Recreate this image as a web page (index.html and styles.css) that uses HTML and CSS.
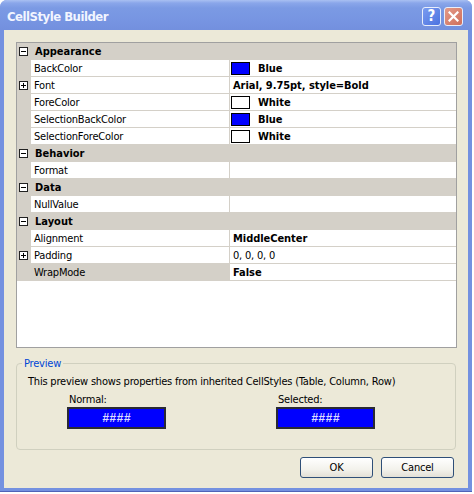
FILE: index.html
```html
<!DOCTYPE html>
<html>
<head>
<meta charset="utf-8">
<link rel="stylesheet" href="styles.css">
</head>
<body>
<div class="window">
  <div class="titlebar">
    <span class="title">CellStyle Builder</span>
    <div class="tbtns">
      <span class="tbtn help">?</span>
      <span class="tbtn close"><svg width="11" height="11" viewBox="0 0 11 11"><path d="M1.5 1.5 L9.5 9.5 M9.5 1.5 L1.5 9.5" stroke="#fff" stroke-width="2.2" stroke-linecap="square"/></svg></span>
    </div>
  </div>
  <div class="client">
    <div class="grid">
      <div class="row cat"><span class="gut"><svg class="ico" width="9" height="9" viewBox="0 0 9 9"><rect x="0.5" y="0.5" width="8" height="8" fill="#fff" stroke="#222"/><path d="M2 4.5 H7" stroke="#000"/></svg></span><span class="catname">Appearance</span></div>
      <div class="row prop"><span class="gut"></span><span class="name">BackColor</span><span class="val"><span class="sw blue"></span><b>Blue</b></span></div>
      <div class="row prop"><span class="gut"><svg class="ico" width="9" height="9" viewBox="0 0 9 9"><rect x="0.5" y="0.5" width="8" height="8" fill="#fff" stroke="#222"/><path d="M2 4.5 H7 M4.5 2 V7" stroke="#000"/></svg></span><span class="name">Font</span><span class="val"><b class="txt">Arial, 9.75pt, style=Bold</b></span></div>
      <div class="row prop"><span class="gut"></span><span class="name">ForeColor</span><span class="val"><span class="sw white"></span><b>White</b></span></div>
      <div class="row prop"><span class="gut"></span><span class="name">SelectionBackColor</span><span class="val"><span class="sw blue"></span><b>Blue</b></span></div>
      <div class="row prop"><span class="gut"></span><span class="name">SelectionForeColor</span><span class="val"><span class="sw white"></span><b>White</b></span></div>
      <div class="row cat"><span class="gut"><svg class="ico" width="9" height="9" viewBox="0 0 9 9"><rect x="0.5" y="0.5" width="8" height="8" fill="#fff" stroke="#222"/><path d="M2 4.5 H7" stroke="#000"/></svg></span><span class="catname">Behavior</span></div>
      <div class="row prop"><span class="gut"></span><span class="name">Format</span><span class="val"></span></div>
      <div class="row cat"><span class="gut"><svg class="ico" width="9" height="9" viewBox="0 0 9 9"><rect x="0.5" y="0.5" width="8" height="8" fill="#fff" stroke="#222"/><path d="M2 4.5 H7" stroke="#000"/></svg></span><span class="catname">Data</span></div>
      <div class="row prop"><span class="gut"></span><span class="name">NullValue</span><span class="val"></span></div>
      <div class="row cat"><span class="gut"><svg class="ico" width="9" height="9" viewBox="0 0 9 9"><rect x="0.5" y="0.5" width="8" height="8" fill="#fff" stroke="#222"/><path d="M2 4.5 H7" stroke="#000"/></svg></span><span class="catname">Layout</span></div>
      <div class="row prop"><span class="gut"></span><span class="name">Alignment</span><span class="val"><b class="txt">MiddleCenter</b></span></div>
      <div class="row prop"><span class="gut"><svg class="ico" width="9" height="9" viewBox="0 0 9 9"><rect x="0.5" y="0.5" width="8" height="8" fill="#fff" stroke="#222"/><path d="M2 4.5 H7 M4.5 2 V7" stroke="#000"/></svg></span><span class="name">Padding</span><span class="val"><span class="txt">0, 0, 0, 0</span></span></div>
      <div class="row prop sel"><span class="gut"></span><span class="name">WrapMode</span><span class="val"><b class="txt">False</b></span></div>
      <div class="filler"></div>
    </div>
    <fieldset class="preview">
      <legend>Preview</legend>
      <p class="note">This preview shows properties from inherited CellStyles (Table, Column, Row)</p>
      <div class="samples">
        <div class="sample"><span class="slabel">Normal:</span><div class="sbox">####</div></div>
        <div class="sample"><span class="slabel">Selected:</span><div class="sbox">####</div></div>
      </div>
    </fieldset>
    <div class="buttons">
      <button class="btn">OK</button>
      <button class="btn">Cancel</button>
    </div>
  </div>
</div>
</body>
</html>
```

FILE: styles.css
```css
html, body {
  margin: 0;
  padding: 0;
  background: #ffffff;
}
body {
  font-family: "DejaVu Sans Condensed", "Liberation Sans", sans-serif;
  font-size: 11px;
  color: #000;
  letter-spacing: -0.2px;
}
b {
  letter-spacing: -0.05px;
}
.window {
  width: 472px;
  height: 492px;
  box-sizing: border-box;
  display: flex;
  flex-direction: column;
  background: #7491e0;
  border-radius: 7px 7px 0 0;
  border-bottom: 1px solid #4f63b8;
  overflow: hidden;
}
.titlebar {
  height: 30px;
  flex: 0 0 30px;
  display: flex;
  align-items: center;
  justify-content: space-between;
  padding: 0 9px 0 7px;
  background: linear-gradient(#a9c0f2 0px, #8aa6ea 3px, #7b9ae4 8px, #7795e2 20px, #7390de 30px);
}
.title {
  color: #f2f5ff;
  font-weight: bold;
  font-size: 13px;
  letter-spacing: -0.5px;
  padding-top: 3px;
}
.tbtns {
  display: flex;
  gap: 3px;
  padding-top: 2px;
}
.tbtn {
  width: 17px;
  height: 17px;
  border: 1px solid #e8eefc;
  border-radius: 3px;
  display: flex;
  align-items: center;
  justify-content: center;
  color: #fff;
  font-weight: bold;
  font-size: 15px;
  letter-spacing: 0;
}
.help {
  background: linear-gradient(135deg, #7a9cf0, #4c72e0);
}
.close {
  background: linear-gradient(135deg, #e49a88, #cf6f5c);
}
.client {
  flex: 1;
  margin: 0 4px 3px 4px;
  background: #ece9d8;
  display: flex;
  flex-direction: column;
  padding: 12px 11px 0 12px;
}
.grid {
  width: 441px;
  height: 306px;
  box-sizing: border-box;
  border: 1px solid #a0a0a0;
  background: #fff;
  display: flex;
  flex-direction: column;
}
.row {
  height: 17px;
  flex: 0 0 17px;
  display: flex;
  line-height: 17px;
  white-space: nowrap;
  overflow: hidden;
}
.cat {
  background: #d4d0c8;
  line-height: 18px;
}
.gut {
  width: 14px;
  flex: 0 0 14px;
  background: #d4d0c8;
}
.ico {
  display: block;
  margin: 4px 0 0 2px;
}
.catname {
  font-weight: bold;
  letter-spacing: 0;
  padding-left: 4px;
}
.name {
  width: 195px;
  flex: 0 0 195px;
  padding: 1px 0 0 3px;
  border-bottom: 1px solid #d4d0c8;
  border-right: 1px solid #d4d0c8;
  line-height: 16px;
}
.sel .name {
  background: #d4d0c8;
}
.val {
  flex: 1;
  border-bottom: 1px solid #d4d0c8;
  line-height: 16px;
  padding-top: 1px;
  display: flex;
  align-items: flex-start;
}
.txt {
  padding-left: 3px;
}
.sw {
  width: 17px;
  height: 11px;
  border: 1px solid #000;
  margin: 1px 8px 0 1px;
  flex: 0 0 auto;
}
.sw.blue { background: #0000ff; }
.sw.white { background: #ffffff; }
.filler {
  flex: 1;
  background: #fff;
}
.preview {
  width: 440px;
  box-sizing: border-box;
  margin: 9px 0 0 0;
  padding: 5px 11px 20px 11px;
  border: 1px solid #d0d0bf;
  border-radius: 4px;
  min-width: 0;
}
.preview legend {
  color: #0046d5;
  padding: 0 2px;
  margin-left: -6px;
  line-height: 13px;
}
.note {
  margin: 0;
  line-height: 13px;
}
.samples {
  display: flex;
  gap: 110px;
  margin: 5px 0 0 39px;
}
.sample {
  display: flex;
  flex-direction: column;
  width: 99px;
}
.slabel {
  padding-left: 2px;
  line-height: 13px;
  margin-bottom: 1px;
}
.sbox {
  height: 22px;
  box-sizing: border-box;
  border: 2px solid #2a2a33;
  background: #0000ff;
  color: #dcdcff;
  font-family: "Liberation Sans", sans-serif;
  font-weight: bold;
  font-style: italic;
  font-size: 12px;
  letter-spacing: 0.5px;
  text-align: center;
  line-height: 18px;
}
.buttons {
  display: flex;
  justify-content: flex-end;
  gap: 8px;
  margin-top: 7px;
  padding-right: 3px;
}
.btn {
  width: 73px;
  height: 21px;
  border: 1px solid #2f4f78;
  border-radius: 3px;
  background: linear-gradient(#ffffff, #f3f2ec 60%, #e3e0d6);
  font-family: "DejaVu Sans Condensed", "Liberation Sans", sans-serif;
  font-size: 11px;
  letter-spacing: -0.2px;
  color: #000;
  padding: 0;
}
```
